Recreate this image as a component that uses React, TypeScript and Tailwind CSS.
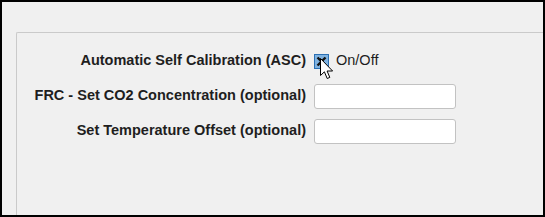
import React from 'react';

function Cursor() {
  return (
    <svg
      className="absolute left-[5px] top-[3px] pointer-events-none"
      width="14"
      height="22"
      viewBox="0 0 14 22"
    >
      <path
        d="M0.5 0.5 L0.5 17.5 L4.4 13.8 L7.2 20.5 L9.8 19.4 L7.1 13 L12.6 13 Z"
        fill="#ffffff"
        stroke="#000000"
        strokeWidth="1"
        strokeLinejoin="miter"
      />
    </svg>
  );
}

function Checkbox() {
  return (
    <div className="relative flex items-center gap-[7px]">
      <div className="relative w-[15px] h-[15px] border border-[#2a6fb3] bg-[#7fb2e0] flex items-center justify-center">
        <svg width="11" height="11" viewBox="0 0 11 11">
          <path d="M1.5 1.5 L9.5 9.5 M9.5 1.5 L1.5 9.5" stroke="#111" strokeWidth="2.4" />
        </svg>
        <Cursor />
      </div>
      <span className="text-[14.5px] text-[#1e1e1e]">On/Off</span>
    </div>
  );
}

function TextBox() {
  return <div className="w-[142px] h-[25px] bg-white border border-[#c2c2c2] rounded-[3px]" />;
}

const rows = [
  { label: 'Automatic Self Calibration (ASC)', kind: 'check' },
  { label: 'FRC - Set CO2 Concentration (optional)', kind: 'input' },
  { label: 'Set Temperature Offset (optional)', kind: 'input' },
];

export default function App() {
  return (
    <div className="w-[545px] h-[217px] border-2 border-black bg-[#f0f0f0] flex flex-col pt-[30px] pl-[14px] font-['Liberation_Sans',Arial,sans-serif] overflow-hidden">
      <div className="flex-1 border-l border-t border-[#cacaca] rounded-tl-[2px] pt-[16px]">
        <div className="grid grid-cols-[289px_auto] gap-x-[8px] gap-y-[11px] items-center">
          {rows.map((r) => (
            <React.Fragment key={r.label}>
              <div className="h-[24px] flex items-center justify-end text-[14.5px] font-bold text-[#1e1e1e] whitespace-nowrap">
                {r.label}
              </div>
              <div className="h-[24px] flex items-center">
                {r.kind === 'check' ? <Checkbox /> : <TextBox />}
              </div>
            </React.Fragment>
          ))}
        </div>
      </div>
    </div>
  );
}
